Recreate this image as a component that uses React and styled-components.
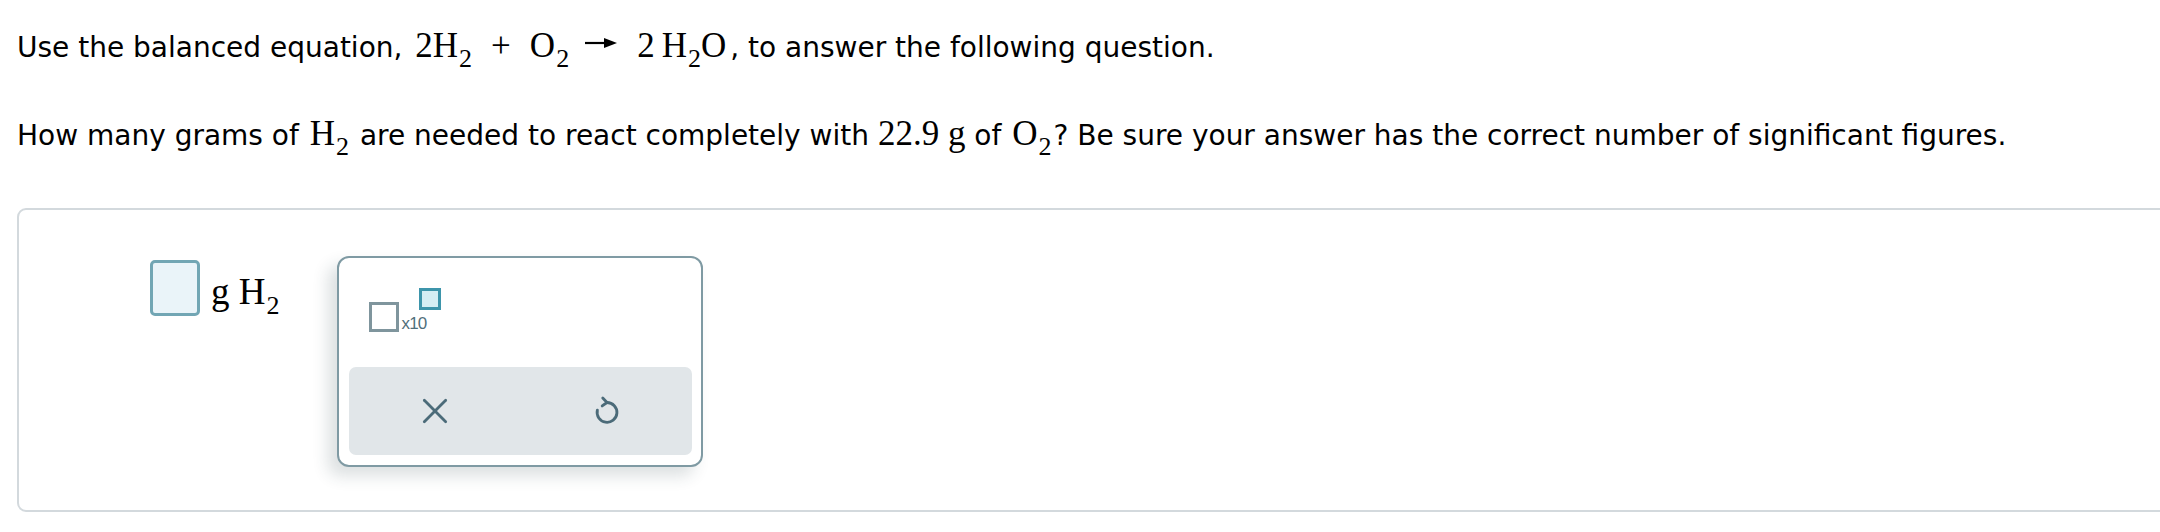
import React from 'react'
import styled, { createGlobalStyle } from 'styled-components'

const GlobalStyle = createGlobalStyle`
  body {
    margin: 0;
    background: #fff;
    overflow: hidden;
    font-family: "DejaVu Sans", Verdana, sans-serif;
    color: #000;
  }
`;

const Page = styled.div`
  width: 2160px;
  padding: 26px 0 0 17px;
  box-sizing: border-box;
`;

const Prompt = styled.p`
  margin: 0 0 ${p => p.$gap || 0}px 0;
  font-size: 28px;
  line-height: 40px;
  white-space: nowrap;
`;

const Math = styled.span`
  font-family: "Liberation Serif", "Times New Roman", serif;
  font-size: ${p => p.$size || 35}px;
  margin: 0 ${p => p.$pad || 0}px;
`;

const Sub = styled.span`
  font-size: 26px;
  line-height: 0;
  position: relative;
  top: 10px;
  margin-left: 1px;
`;

const Op = styled.span`
  display: inline-block;
  margin: 0 ${p => p.$space}px;
`;

const ArrowIcon = styled.svg`
  display: inline-block;
  vertical-align: 8px;
  margin: 0 20px 0 16px;
`;

const AnswerCard = styled.div`
  width: 2300px;
  height: 304px;
  margin-top: 52px;
  border: 2px solid #d3d9dd;
  border-radius: 9px;
  box-sizing: border-box;
  padding: 50px 0 0 131px;
`;

const AnswerRow = styled.div`
  display: flex;
  align-items: flex-start;
`;

const InputBox = styled.div`
  width: 50px;
  height: 56px;
  box-sizing: border-box;
  border: 3px solid #72a6b4;
  border-radius: 5px;
  background: #eaf4f9;
`;

const Unit = styled.span`
  font-family: "Liberation Serif", "Times New Roman", serif;
  font-size: 37px;
  line-height: 56px;
  margin: 4px 0 0 11px;
  white-space: nowrap;
`;

const Palette = styled.div`
  width: 366px;
  height: 211px;
  margin: -4px 0 0 58px;
  box-sizing: border-box;
  border: 2px solid #7f9aa3;
  border-radius: 12px;
  background: #fff;
  padding: 10px 9px 10px 10px;
  display: flex;
  flex-direction: column;
  box-shadow: -9px 9px 16px rgba(40, 60, 70, 0.16);
`;

const TemplateArea = styled.div`
  height: 99px;
  padding: 20px 0 0 20px;
  box-sizing: border-box;
`;

const SciWidget = styled.div`
  display: inline-flex;
  align-items: flex-end;
  height: 44px;
`;

const Square = styled.div`
  width: ${p => p.$size}px;
  height: ${p => p.$size}px;
  box-sizing: border-box;
  border: 3px solid ${p => p.$color};
  background: ${p => p.$fill};
`;

const ExpSlot = styled(Square)`
  align-self: flex-start;
  margin-left: -8px;
`;

const Times10 = styled.span`
  font-family: "Liberation Sans", Arial, sans-serif;
  font-size: 17px;
  line-height: 17px;
  color: #516f7b;
  margin: 0 0 0 2px;
  letter-spacing: -0.8px;
`;

const ActionBar = styled.div`
  flex: 1;
  display: flex;
  background: #e1e6e9;
  border-radius: 7px;
`;

const ActionButton = styled.div`
  flex: 1;
  display: flex;
  align-items: center;
  justify-content: center;
  color: #4b6b79;
`;

const Arrow = () => (
  <ArrowIcon width="32" height="12" viewBox="0 0 32 12">
    <line x1="0" y1="6" x2="22" y2="6" stroke="#000" strokeWidth="2.2" />
    <polygon points="19,1 32,6 19,11" fill="#000" />
  </ArrowIcon>
);

const CloseIcon = () => (
  <svg width="32" height="32" viewBox="0 0 24 24" fill="none" stroke="currentColor" strokeWidth="2.1" strokeLinecap="round">
    <line x1="4" y1="4" x2="20" y2="20" />
    <line x1="20" y1="4" x2="4" y2="20" />
  </svg>
);

const UndoIcon = () => (
  <svg width="34" height="34" viewBox="0 0 24 24" fill="none" stroke="currentColor" strokeWidth="2" strokeLinecap="round" strokeLinejoin="round">
    <path d="M12 6 A7 7 0 1 1 5.2 11.4" />
    <path d="M9 2.8 L12 6 L8.6 8.4" />
  </svg>
);

const App = () => {
  return (
    <>
      <GlobalStyle />
      <Page>
        <Prompt $gap={46}>
          Use the balanced equation,{' '}
          <Math $pad={4}>
            2H<Sub>2</Sub>
            <Op $space={19}>+</Op>
            O<Sub>2</Sub>
            <Arrow />
            2&thinsp;H<Sub>2</Sub>O
          </Math>
          , to answer the following question.
        </Prompt>
        <Prompt>
          How many grams of <Math $pad={2}>H<Sub>2</Sub></Math> are needed to react completely with{' '}
          <Math>22.9 g</Math> of <Math $pad={2}>O<Sub>2</Sub></Math>? Be sure your answer has the correct number of significant figures.
        </Prompt>

        <AnswerCard>
          <AnswerRow>
            <InputBox />
            <Unit>g H<Sub>2</Sub></Unit>
            <Palette>
              <TemplateArea>
                <SciWidget>
                  <Square $size={30} $color="#7f959d" $fill="#fff" />
                  <Times10>x10</Times10>
                  <ExpSlot $size={22} $color="#3d95ab" $fill="#d5eef4" />
                </SciWidget>
              </TemplateArea>
              <ActionBar>
                <ActionButton><CloseIcon /></ActionButton>
                <ActionButton><UndoIcon /></ActionButton>
              </ActionBar>
            </Palette>
          </AnswerRow>
        </AnswerCard>
      </Page>
    </>
  )
}

export default App
